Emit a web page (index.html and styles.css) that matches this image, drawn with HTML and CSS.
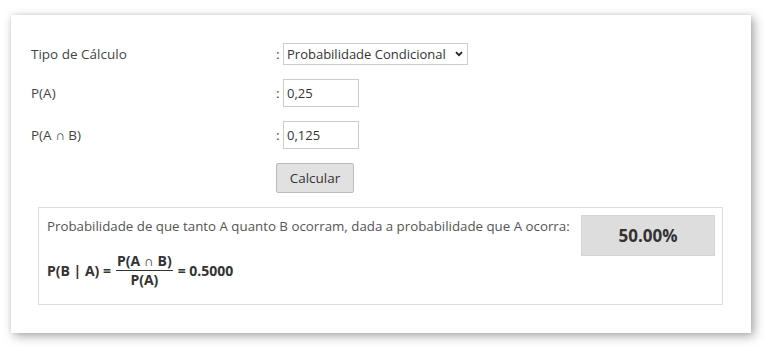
FILE: index.html
```html
<!DOCTYPE html>
<html>
<head>
	<meta charset="UTF-8">
	<title>Probabilidade Condicional</title>
	<link rel="stylesheet" href="styles.css">
</head>
<body>

<section class="calc">
	<div class="form">
		<label class="lbl">Tipo de Cálculo</label>
		<div class="field">
			<span class="colon">:</span>
			<span class="selWrap">
				<select class="sel">
					<option>Probabilidade Condicional</option>
				</select>
				<svg class="chev" width="8" height="6" viewBox="0 0 8 6"><path d="M1 1.2 L4 4.2 L7 1.2" fill="none" stroke="#222" stroke-width="1.8"/></svg>
			</span>
		</div>

		<label class="lbl">P(A)</label>
		<div class="field">
			<span class="colon">:</span>
			<input type="text" class="num" value="0,25">
		</div>

		<label class="lbl">P(A ∩ B)</label>
		<div class="field">
			<span class="colon">:</span>
			<input type="text" class="num" value="0,125">
		</div>

		<span></span>
		<div class="field">
			<input type="button" class="btn" value="Calcular">
		</div>
	</div>

	<!-- resultado -->
	<div class="result">
		<div class="pct">50.00%</div>
		<p class="desc">Probabilidade de que tanto A quanto B ocorram, dada a probabilidade que A ocorra:</p>
		<div class="formula">
			<span>P(B | A) =</span>
			<span class="frac">
				<span class="top">P(A ∩ B)</span>
				<span class="bot">P(A)</span>
			</span>
			<span>= 0.5000</span>
		</div>
	</div>
</section>

</body>
</html>
```

FILE: styles.css
```css
body {
	margin: 0;
	padding: 15px 17px 18px 11px;
	background: #fff;
	font-family: "Open Sans", "Noto Sans", sans-serif;
	font-size: 13.5px;
	color: #444;
}
p {
	margin: 0;
}
input,
select {
	font-family: inherit;
	outline: none;
}
.calc {
	width: 740px;
	height: 318px;
	box-sizing: border-box;
	padding: 28px 28px 0 27px;
	background: #fff;
	box-shadow: 3px 3px 10px rgba(0, 0, 0, 0.35), 0 0 4px rgba(0, 0, 0, 0.08);
}
.form {
	display: grid;
	grid-template-columns: 245px auto;
	row-gap: 14px;
	align-items: center;
	margin-left: -7px;
}
.lbl {
	line-height: 20px;
}
.field {
	display: flex;
	align-items: center;
}
.colon {
	width: 7px;
	line-height: 20px;
}
.selWrap {
	position: relative;
	display: inline-block;
}
.sel {
	-webkit-appearance: none;
	appearance: none;
	width: 185px;
	height: 22px;
	padding: 0 0 0 3px;
	border: 1px solid #ccc;
	border-radius: 0;
	background: #fff;
	font-size: 13px;
	color: #333;
}
.chev {
	position: absolute;
	right: 5px;
	top: 8px;
}
.num {
	width: 76px;
	height: 28px;
	box-sizing: border-box;
	padding: 0 3px;
	border: 1px solid #ccc;
	font-size: 13px;
	color: #333;
}
.btn {
	width: 78px;
	height: 30px;
	border: 1px solid #bbb;
	border-radius: 2px;
	background: #e1e1e1;
	font-family: inherit;
	font-size: 13.5px;
	color: #333;
}
.result {
	margin-top: 14px;
	padding: 8px 7px 15px 8px;
	border: 1px solid #ddd;
	color: #555;
}
.desc {
	font-size: 13.3px;
	line-height: 20px;
}
.pct {
	float: right;
	width: 134px;
	height: 41px;
	margin-top: -1px;
	background: #ddd;
	border: 1px solid #d3d3d3;
	box-sizing: border-box;
	text-align: center;
	line-height: 40px;
	font-size: 17px;
	font-weight: bold;
	color: #333;
}
.formula {
	display: flex;
	align-items: center;
	gap: 5px;
	margin-top: 16px;
	font-size: 14px;
	font-weight: bold;
	color: #333;
}
.frac {
	display: inline-flex;
	flex-direction: column;
	align-items: center;
	line-height: 18px;
}
.frac .top {
	padding: 0 1px;
	border-bottom: 1px solid #333;
}
```
